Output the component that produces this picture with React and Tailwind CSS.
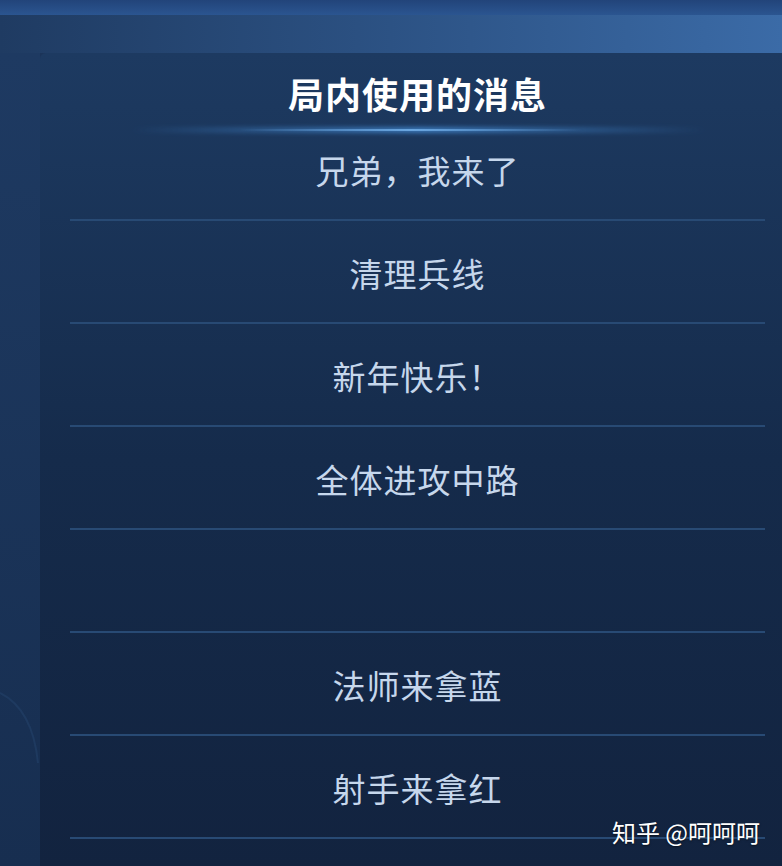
import React from "react";

const messages = ["兄弟，我来了", "清理兵线", "新年快乐！", "全体进攻中路", "", "法师来拿蓝", "射手来拿红", ""];

export default function App() {
  return (
    <div
      className="relative w-[782px] h-[866px] overflow-hidden flex flex-col bg-[#1b3459]"
      style={{ fontFamily: '"Noto Sans CJK SC", "Noto Sans", sans-serif' }}
    >
      {/* Top strip */}
      <div className="h-[15px] shrink-0 bg-gradient-to-b from-[#22447a] to-[#2b5590]" />
      <div className="h-[38px] shrink-0 bg-gradient-to-r from-[#1f3b62] via-[#2c5284] to-[#3b6ba7]" />

      {/* Panel */}
      <div className="flex-1 min-h-0 flex bg-[#1b3459]">
        {/* left side with faint arc */}
        <div className="relative w-[40px] shrink-0 bg-gradient-to-b from-[#1e3a62] to-[#172e50]">
          <svg className="absolute left-0 top-[600px]" width="40" height="160" viewBox="0 0 40 160">
            <path d="M0 40 C20 50 34 70 38 110" stroke="#2c4c78" strokeWidth="2" fill="none" opacity="0.35" />
          </svg>
        </div>
        <div className="relative flex-1 flex flex-col rounded-tl-md bg-gradient-to-b from-[#1d3a61] via-[#152b4b] to-[#12233f]">
          <div className="h-[65px] shrink-0 flex items-center justify-center pt-[14px] pl-[30px] pr-[17px]">
            <h1 className="text-[36px] font-bold text-white tracking-[1px] leading-none">局内使用的消息</h1>
          </div>
          {/* title glow */}
          <div className="absolute left-[90px] right-[75px] top-[74px] h-[6px] rounded-full bg-gradient-to-r from-transparent via-[#3f80c4] to-transparent blur-[2px] opacity-90" />
          <div className="absolute left-[200px] right-[200px] top-[76px] h-[2px] bg-gradient-to-r from-transparent via-[#6aa6e0] to-transparent" />

          <div className="pl-[30px] pr-[17px] flex flex-col">
            {messages.map((m, i) => (
              <div
                key={i}
                className="h-[103px] shrink-0 flex items-center justify-center pt-[4px] border-b-2 border-[#284a74]"
              >
                <span className="text-[33px] text-[#c6d7ec] tracking-[1px] leading-none">{m}</span>
              </div>
            ))}
          </div>
        </div>
      </div>

      {/* Watermark */}
      <div className="absolute right-[22px] bottom-[22px] text-[24px] text-white leading-none [text-shadow:0_1px_2px_rgba(0,0,0,0.6)]">
        知乎 @呵呵呵
      </div>
    </div>
  );
}
